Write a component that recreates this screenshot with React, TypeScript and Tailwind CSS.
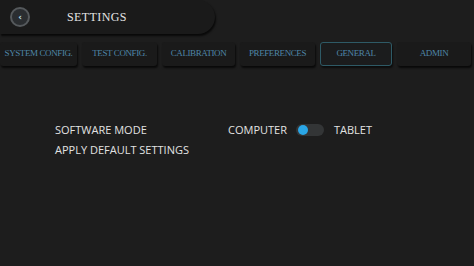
const tabs = [
  { label: "SYSTEM CONFIG.", w: "w-[77px]" },
  { label: "TEST CONFIG.", w: "w-[75px]" },
  { label: "CALIBRATION", w: "w-[73px]" },
  { label: "PREFERENCES", w: "w-[75px]" },
  { label: "GENERAL", w: "w-[72px]" },
  { label: "ADMIN", w: "w-[74px]" },
];

export default function App() {
  return (
    <div className="h-[266px] w-[474px] overflow-hidden bg-[#1d1d1d]">
      <div className="flex h-[34px] w-[215px] items-center rounded-br-[18px] rounded-tr-[18px] bg-[#1a1a1a] shadow-[1px_2px_2px_rgba(0,0,0,0.7)]">
        <div className="ml-[10px] flex h-[20px] w-[20px] items-center justify-center rounded-full border-2 border-[#55595c] bg-[#2a2d30]">
          <span className="text-[9px] font-bold leading-none text-[#b8dde0]" style={{ fontFamily: '"DejaVu Sans", sans-serif' }}>‹</span>
        </div>
        <span className="ml-[37px] text-[12px] tracking-[0.4px] text-[#e4e4e4]" style={{ fontFamily: '"Liberation Serif", serif' }}>SETTINGS</span>
      </div>

      <div className="mt-[8px] flex gap-[5px]">
        {tabs.map((t) => (
          <div
            key={t.label}
            className={
              t.label === "GENERAL"
                ? `flex h-[24px] ${t.w} items-center justify-center rounded-[3px] border border-[#2e5a66] bg-[#1b1c1d] shadow-[1px_2px_2px_rgba(0,0,0,0.6)]`
                : `flex h-[24px] ${t.w} items-center justify-center rounded-[3px] bg-[#1a1a1a] shadow-[1px_2px_2px_rgba(0,0,0,0.7)]`
            }
          >
            <span className="text-[9px] tracking-[-0.4px] text-[#4f86a8]" style={{ fontFamily: '"Liberation Serif", serif' }}>{t.label}</span>
          </div>
        ))}
      </div>

      <div className="mt-[54px] pl-[55px] text-[11px] leading-[20px] text-[#e2e2e2]" style={{ fontFamily: '"Open Sans", sans-serif' }}>
        <div className="flex items-center">
          <span className="w-[173px]">SOFTWARE MODE</span>
          <span>COMPUTER</span>
          <div className="ml-[9px] flex h-[12px] w-[28px] items-center rounded-full bg-[#333536] pl-[2px]">
            <div className="h-[10px] w-[10px] rounded-full bg-[#2aa6e6]" />
          </div>
          <span className="ml-[10px]">TABLET</span>
        </div>
        <div>APPLY DEFAULT SETTINGS</div>
      </div>
    </div>
  );
}
